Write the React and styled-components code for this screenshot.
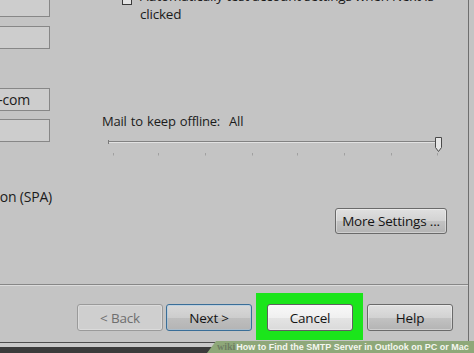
import React from 'react'
import styled, { createGlobalStyle, css } from 'styled-components'

const Global = createGlobalStyle`
  html, body {
    margin: 0;
    padding: 0;
    background: #c3c3c3;
  }
`

const ui = `'Open Sans', 'Noto Sans', sans-serif`

const Screen = styled.div`
  position: relative;
  width: 474px;
  height: 353px;
  overflow: hidden;
  background: #c4c4c4;
  font-family: ${ui};
  font-size: 13px;
  letter-spacing: -0.2px;
  color: #1b1b1b;
`

const Panel = styled.div`
  width: 469px;
  height: 342px;
  box-sizing: border-box;
  border-right: 1px solid #6f6f6f;
  display: flex;
  flex-direction: column;
`

const Body = styled.div`
  height: 285px;
  box-sizing: border-box;
  border-bottom: 1px solid #878787;
  display: grid;
  grid-template-columns: 50px 1fr;
`

const LeftCol = styled.div`
  display: flex;
  flex-direction: column;
  margin-top: -6px;
`

const Field = styled.div`
  box-sizing: border-box;
  width: 150px;
  height: 23px;
  margin-left: -100px;
  margin-top: ${p => p.gap || 0}px;
  border: 1px solid #878787;
  background: #cdcdcd;
  display: flex;
  align-items: center;
  justify-content: flex-end;
  padding-right: 19px;
  white-space: nowrap;
  font-size: 14px;
`

const CutText = styled.div`
  width: 52px;
  margin-top: ${p => p.gap || 0}px;
  display: flex;
  justify-content: flex-end;
  white-space: nowrap;
  line-height: 18px;
  font-size: 14px;
`

const RightCol = styled.div`
  display: flex;
  flex-direction: column;
  padding-left: 52px;
`

const CheckRow = styled.div`
  display: flex;
  align-items: flex-start;
  gap: 8px;
  margin-top: -13px;
  padding-left: 20px;
  line-height: 18px;
  font-size: 13.5px;
`

const CheckBox = styled.span`
  flex: none;
  width: 8px;
  height: 8px;
  margin-top: 8px;
  border: 1px solid #3a3a3a;
  background: #e4e4e4;
`

const Label = styled.div`
  margin-top: 89px;
  line-height: 18px;
  font-size: 13px;
  word-spacing: 1px;

  span {
    margin-left: 9px;
  }
`

const SliderArt = styled.svg`
  display: block;
  margin-top: 4px;
  margin-left: -2px;
`

const Btn = styled.button`
  box-sizing: border-box;
  height: 27px;
  width: ${p => p.w || 86}px;
  margin: 0;
  padding: 0;
  font-family: ${ui};
  font-size: 13.5px;
  letter-spacing: -0.2px;
  color: #141414;
  border: 1px solid #6a6a6a;
  border-radius: 3px;
  background: linear-gradient(#e0e0e0 0%, #d2d2d2 50%, #c2c2c2 52%, #b4b4b4 100%);
  box-shadow: inset 0 0 0 1px rgba(255, 255, 255, 0.35);

  ${p => p.kind === 'disabled' && css`
    color: #6e6e6e;
    border-color: #9a9a9a;
    background: #cfcfcf;
    box-shadow: inset 0 0 0 1px rgba(255, 255, 255, 0.25);
  `}

  ${p => p.kind === 'default' && css`
    border-color: #3a6e98;
    background: linear-gradient(#d9d9d9 0%, #cdcdcd 50%, #bebebe 52%, #b4b4b4 100%);
    box-shadow: inset 0 0 0 1px rgba(160, 200, 230, 0.45);
  `}

  ${p => p.kind === 'light' && css`
    border-color: #5f5f5f;
    background: linear-gradient(#f8f8f8 0%, #f0f0f0 50%, #e4e4e4 52%, #dadada 100%);
  `}
`

const MoreBtn = styled(Btn)`
  align-self: flex-end;
  margin-top: 50px;
  margin-right: 21px;
  height: 26px;
`

const Footer = styled.div`
  height: 57px;
  box-sizing: border-box;
  border-top: 1px solid #dcdcdc;
  display: flex;
  align-items: flex-start;
  padding: 7px 0 0 77px;

  & > ${Btn} {
    margin-top: 11px;
  }
`

const Highlight = styled.div`
  box-sizing: border-box;
  height: 47px;
  margin: 0 4px;
  padding: 11px 10px 0 11px;
  background: #1be51b;
`

const Edge = styled.div`
  height: 1px;
  background: #4d4d4d;
`

const Shine = styled.div`
  height: 4px;
  background: #c9c9c9;
`

const Dark = styled.div`
  height: 6px;
  background: #3b3b3b;
`

const Caption = styled.div`
  position: absolute;
  left: 207px;
  right: 0;
  bottom: 0;
  height: 12px;
  padding-left: 10px;
  background: #8ea879;
  clip-path: polygon(9px 0, 100% 0, 100% 100%, 0 100%);
  display: flex;
  align-items: center;
  gap: 1px;
  white-space: nowrap;
  font-family: 'Liberation Sans', Arial, sans-serif;
  font-weight: bold;
  font-size: 9px;
  letter-spacing: 0;
  line-height: 12px;
  color: #f4f7ef;

  b {
    font-family: 'Liberation Serif', serif;
    font-size: 10px;
    color: #6d7d62;
  }
`

const Slider = () => {
  const ticks = [13, 58, 105, 152, 197, 244, 291, 337]
  return (
    <SliderArt width="346" height="24" viewBox="0 0 346 24">
      <line x1="8" y1="7.5" x2="336" y2="7.5" stroke="#828282" />
      <line x1="8" y1="8.5" x2="336" y2="8.5" stroke="#e2e2e2" />
      <line x1="8.5" y1="6" x2="8.5" y2="10" stroke="#7a7a7a" />
      {ticks.map(x => (
        <line key={x} x1={x + 0.5} y1="19" x2={x + 0.5} y2="21.5" stroke="#a0a0a0" />
      ))}
      <path d="M335.5 3.5h6v10l-3 4l-3 -4z" fill="#e6e6e6" stroke="#4a4a4a" />
    </SliderArt>
  )
}

export default function App() {
  return (
    <Screen>
      <Global />
      <Panel>
        <Body>
          <LeftCol>
            <Field />
            <Field gap={9} />
            <Field gap={39}>-com</Field>
            <Field gap={8} />
            <CutText gap={46}>on (SPA)</CutText>
          </LeftCol>
          <RightCol>
            <CheckRow>
              <CheckBox />
              <div>
                Automatically test account settings when Next is
                <br />
                clicked
              </div>
            </CheckRow>
            <Label>
              Mail to keep offline:<span>All</span>
            </Label>
            <Slider />
            <MoreBtn w={112}>More Settings ...</MoreBtn>
          </RightCol>
        </Body>
        <Footer>
          <Btn kind="disabled">&lt; Back</Btn>
          <Btn kind="default" style={{ marginLeft: 3 }}>Next &gt;</Btn>
          <Highlight>
            <Btn kind="light">Cancel</Btn>
          </Highlight>
          <Btn>Help</Btn>
        </Footer>
      </Panel>
      <Edge />
      <Shine />
      <Dark />
      <Caption>
        <b>wiki</b>How to Find the SMTP Server in Outlook on PC or Mac
      </Caption>
    </Screen>
  )
}
